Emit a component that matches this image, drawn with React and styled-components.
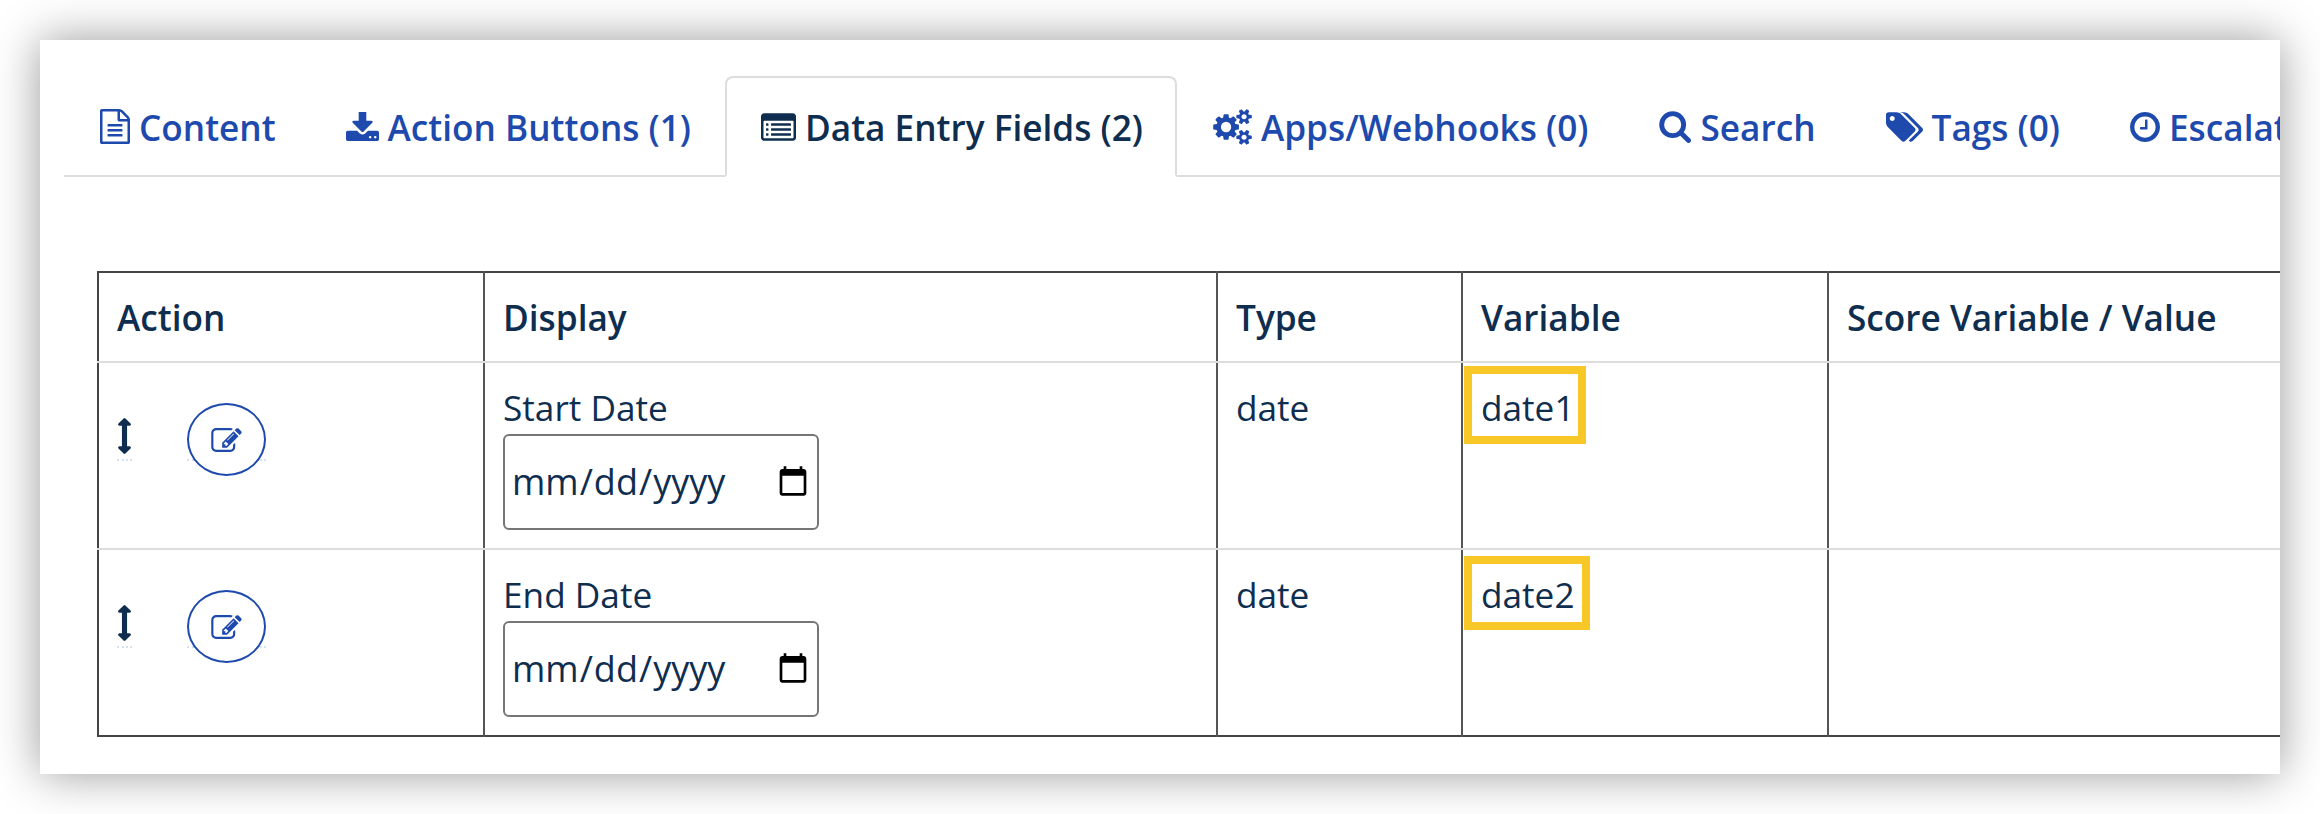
import React from 'react';
import styled, { createGlobalStyle } from 'styled-components';

const icons = {
  file: {
    box: '128 0 1536 1792',
    w: 30,
    h: 35,
    d: 'M1596 380q28 28 48 76t20 88v1152q0 40-28 68t-68 28h-1344q-40 0-68-28t-28-68v-1600q0-40 28-68t68-28h896q40 0 88 20t76 48zm-444-244v376h376q-10-29-22-41l-313-313q-12-12-41-22zm384 1528v-1024h-416q-40 0-68-28t-28-68v-416h-768v1536h1280zm-1024-864q0-14 9-23t23-9h704q14 0 23 9t9 23v64q0 14-9 23t-23 9h-704q-14 0-23-9t-9-23v-64zm736 224q14 0 23 9t9 23v64q0 14-9 23t-23 9h-704q-14 0-23-9t-9-23v-64q0-14 9-23t23-9h704zm0 256q14 0 23 9t9 23v64q0 14-9 23t-23 9h-704q-14 0-23-9t-9-23v-64q0-14 9-23t23-9h704z',
  },
  download: {
    box: '64 128 1664 1408',
    w: 33,
    h: 30,
    d: 'M1344 1344q0-26-19-45t-45-19-45 19-19 45 19 45 45 19 45-19 19-45zm256 0q0-26-19-45t-45-19-45 19-19 45 19 45 45 19 45-19 19-45zm128-224v320q0 40-28 68t-68 28h-1472q-40 0-68-28t-28-68v-320q0-40 28-68t68-28h465l135 136q58 56 136 56t136-56l136-136h464q40 0 68 28t28 68zm-325-569q17 41-14 70l-448 448q-18 19-45 19t-45-19l-448-448q-31-29-14-70 17-39 59-39h256v-448q0-26 19-45t45-19h256q26 0 45 19t19 45v448h256q42 0 59 39z',
  },
  list: {
    box: '0 128 1792 1408',
    w: 35,
    h: 28,
    d: 'M384 1184v64q0 13-9.5 22.5t-22.5 9.5h-64q-13 0-22.5-9.5t-9.5-22.5v-64q0-13 9.5-22.5t22.5-9.5h64q13 0 22.5 9.5t9.5 22.5zm0-256v64q0 13-9.5 22.5t-22.5 9.5h-64q-13 0-22.5-9.5t-9.5-22.5v-64q0-13 9.5-22.5t22.5-9.5h64q13 0 22.5 9.5t9.5 22.5zm0-256v64q0 13-9.5 22.5t-22.5 9.5h-64q-13 0-22.5-9.5t-9.5-22.5v-64q0-13 9.5-22.5t22.5-9.5h64q13 0 22.5 9.5t9.5 22.5zm1152 512v64q0 13-9.5 22.5t-22.5 9.5h-960q-13 0-22.5-9.5t-9.5-22.5v-64q0-13 9.5-22.5t22.5-9.5h960q13 0 22.5 9.5t9.5 22.5zm0-256v64q0 13-9.5 22.5t-22.5 9.5h-960q-13 0-22.5-9.5t-9.5-22.5v-64q0-13 9.5-22.5t22.5-9.5h960q13 0 22.5 9.5t9.5 22.5zm0-256v64q0 13-9.5 22.5t-22.5 9.5h-960q-13 0-22.5-9.5t-9.5-22.5v-64q0-13 9.5-22.5t22.5-9.5h960q13 0 22.5 9.5t9.5 22.5zm128 704v-832q0-13-9.5-22.5t-22.5-9.5h-1472q-13 0-22.5 9.5t-9.5 22.5v832q0 13 9.5 22.5t22.5 9.5h1472q13 0 22.5-9.5t9.5-22.5zm128-1088v1088q0 66-47 113t-113 47h-1472q-66 0-113-47t-47-113v-1088q0-66 47-113t113-47h1472q66 0 113 47t47 113z',
  },
  cogs: {
    box: '0 0 1920 1792',
    w: 39,
    h: 36,
    d: 'M896 896q0-106-75-181t-181-75-181 75-75 181 75 181 181 75 181-75 75-181zm768 512q0-52-38-90t-90-38-90 38-38 90q0 53 37.5 90.5t90.5 37.5 90.5-37.5 37.5-90.5zm0-1024q0-52-38-90t-90-38-90 38-38 90q0 53 37.5 90.5t90.5 37.5 90.5-37.5 37.5-90.5zm-384 421v185q0 10-7 19.5t-16 10.5l-155 24q-11 35-32 76 34 48 90 115 7 11 7 20 0 12-7 19-23 30-82.5 89.5t-78.5 59.5q-11 0-21-7l-115-90q-37 19-77 31-11 108-23 155-7 24-30 24h-186q-11 0-20-7.5t-10-17.5l-23-153q-34-10-75-31l-118 89q-7 7-20 7-11 0-21-8-144-133-144-160 0-9 7-19 10-14 41-53t47-61q-23-44-35-82l-152-24q-10-1-17-9.5t-7-19.5v-185q0-10 7-19.5t16-10.5l155-24q11-35 32-76-34-48-90-115-7-11-7-20 0-12 7-20 22-30 82-89t79-59q11 0 21 7l115 90q34-18 77-32 11-108 23-154 7-24 30-24h186q11 0 20 7.5t10 17.5l23 153q34 10 75 31l118-89q8-7 20-7 11 0 21 8 144 133 144 160 0 8-7 19-12 16-42 54t-45 60q23 48 34 82l152 23q10 2 17 10.5t7 19.5zm640 533v140q0 16-149 31-12 27-30 52 51 113 51 138 0 4-4 7-122 71-124 71-8 0-46-47t-52-68q-20 2-30 2t-30-2q-14 21-52 68t-46 47q-2 0-124-71-4-3-4-7 0-25 51-138-18-25-30-52-149-15-149-31v-140q0-16 149-31 13-29 30-52-51-113-51-138 0-4 4-7 4-2 35-20t59-34 30-16q8 0 46 46.5t52 67.5q20-2 30-2t30 2q51-71 92-112l6-2q4 0 124 70 4 3 4 7 0 25-51 138 17 23 30 52 149 15 149 31zm0-1024v140q0 16-149 31-12 27-30 52 51 113 51 138 0 4-4 7-122 71-124 71-8 0-46-47t-52-68q-20 2-30 2t-30-2q-14 21-52 68t-46 47q-2 0-124-71-4-3-4-7 0-25 51-138-18-25-30-52-149-15-149-31v-140q0-16 149-31 13-29 30-52-51-113-51-138 0-4 4-7 4-2 35-20t59-34 30-16q8 0 46 46.5t52 67.5q20-2 30-2t30 2q51-71 92-112l6-2q4 0 124 70 4 3 4 7 0 25-51 138 17 23 30 52 149 15 149 31z',
  },
  search: {
    box: '0 64 1728 1728',
    w: 33,
    h: 33,
    d: 'M1216 832q0-185-131.5-316.5t-316.5-131.5-316.5 131.5-131.5 316.5 131.5 316.5 316.5 131.5 316.5-131.5 131.5-316.5zm512 832q0 52-38 90t-90 38q-54 0-90-38l-343-342q-179 124-399 124-143 0-273.5-55.5t-225-150-150-225-55.5-273.5 55.5-273.5 150-225 225-150 273.5-55.5 273.5 55.5 225 150 150 225 55.5 273.5q0 220-124 399l343 343q37 37 37 90z',
  },
  tags: {
    box: '0 128 1899 1515',
    w: 37,
    h: 30,
    d: 'M448 448q0-53-37.5-90.5t-90.5-37.5-90.5 37.5-37.5 90.5 37.5 90.5 90.5 37.5 90.5-37.5 37.5-90.5zm1067 576q0 53-37 90l-491 492q-39 37-91 37-53 0-90-37l-715-716q-38-37-64.5-101t-26.5-117v-416q0-52 38-90t90-38h416q53 0 117 26.5t102 64.5l715 714q37 39 37 91zm384 0q0 53-37 90l-491 492q-39 37-91 37-36 0-59-14t-53-45l470-470q37-37 37-90 0-52-37-91l-715-714q-38-38-102-64.5t-117-26.5h224q53 0 117 26.5t102 64.5l715 714q37 39 37 91z',
  },
  clock: {
    box: '128 128 1536 1536',
    w: 30,
    h: 30,
    d: 'M1024 544v448q0 14-9 23t-23 9h-320q-14 0-23-9t-9-23v-64q0-14 9-23t23-9h224v-352q0-14 9-23t23-9h64q14 0 23 9t9 23zm416 352q0-148-73-273t-198-198-273-73-273 73-198 198-73 273 73 273 198 198 273 73 273-73 198-198 73-273zm224 0q0 209-103 385.5t-279.5 279.5-385.5 103-385.5-103-279.5-279.5-103-385.5 103-385.5 279.5-279.5 385.5-103 385.5 103 279.5 279.5 103 385.5z',
  },
  edit: {
    box: '0 128 1792 1408',
    w: 31,
    h: 24,
    d: 'M888 1184l116-116-152-152-116 116v56h96v96h56zm440-720q-16-16-33 1l-350 350q-17 17-1 33t33-1l350-350q17-17 1-33zm80 594v190q0 119-84.5 203.5t-203.5 84.5h-832q-119 0-203.5-84.5t-84.5-203.5v-832q0-119 84.5-203.5t203.5-84.5h832q63 0 117 25 15 7 18 23 3 17-9 29l-49 49q-14 14-32 8-23-6-45-6h-832q-66 0-113 47t-47 113v832q0 66 47 113t113 47h832q66 0 113-47t47-113v-126q0-13 9-22l64-64q15-15 35-7t20 29zm-96-738l288 288-672 672h-288v-288zm444 132l-92 92-288-288 92-92q28-28 68-28t68 28l152 152q28 28 28 68t-28 68z',
  },
  move: {
    box: '384 0 640 1792',
    w: 13,
    h: 36,
    d: 'M1024 320q0 26-19 45t-45 19h-128v1024h128q26 0 45 19t19 45-19 45l-256 256q-19 19-45 19t-45-19l-256-256q-19-19-19-45t19-45 45-19h128v-1024h-128q-26 0-45-19t-19-45 19-45l256-256q19-19 45-19t45 19l256 256q19 19 19 45z',
  },
};

const tabs = [
  { label: 'Content', icon: 'file' },
  { label: 'Action Buttons (1)', icon: 'download' },
  { label: 'Data Entry Fields (2)', icon: 'list', active: true },
  { label: 'Apps/Webhooks (0)', icon: 'cogs' },
  { label: 'Search', icon: 'search' },
  { label: 'Tags (0)', icon: 'tags' },
  { label: 'Escalations (0)', icon: 'clock' },
];

const rows = [
  { display: 'Start Date', type: 'date', variable: 'date1', box: { top: 3, w: 122, h: 78 } },
  { display: 'End Date', type: 'date', variable: 'date2', box: { top: 6, w: 126, h: 74 } },
];

const Icon = ({ name }) => {
  const { box, w, h, d } = icons[name];
  return (
    <svg viewBox={box} width={w} height={h} fill="currentColor" aria-hidden="true">
      <path d={d} />
    </svg>
  );
};

const App = () => {
  return (
    <>
      <GlobalStyle />
      <Page>
        <Card>
          <TabBar>
            {tabs.map((tab) => (
              <Tab key={tab.label} $active={tab.active}>
                <Icon name={tab.icon} />
                {tab.label}
              </Tab>
            ))}
          </TabBar>
          <Table>
            <colgroup>
              <col width="386" />
              <col width="733" />
              <col width="245" />
              <col width="366" />
              <col width="600" />
            </colgroup>
            <thead>
              <tr>
                <HeadCell>Action</HeadCell>
                <HeadCell>Display</HeadCell>
                <HeadCell>Type</HeadCell>
                <HeadCell>Variable</HeadCell>
                <HeadCell>Score Variable / Value</HeadCell>
              </tr>
            </thead>
            <tbody>
              {rows.map((row) => (
                <tr key={row.variable}>
                  <Cell>
                    <Actions>
                      <ActionLink>
                        <MoveHandle>
                          <Icon name="move" />
                        </MoveHandle>
                      </ActionLink>
                      <ActionLink>
                        <EditButton>
                          <Icon name="edit" />
                        </EditButton>
                      </ActionLink>
                    </Actions>
                  </Cell>
                  <Cell>
                    {row.display}
                    <DateInput type="date" />
                  </Cell>
                  <Cell>{row.type}</Cell>
                  <VariableCell>
                    {row.variable}
                    <Highlight $top={row.box.top} $w={row.box.w} $h={row.box.h} />
                  </VariableCell>
                  <Cell />
                </tr>
              ))}
            </tbody>
          </Table>
        </Card>
      </Page>
    </>
  );
};

export default App;

const GlobalStyle = createGlobalStyle`
  html, body {
    margin: 0;
    background: #fff;
  }
  body {
    font-family: 'Open Sans', 'Noto Sans', sans-serif;
    color: #0f2e4f;
  }
`;
const Page = styled.div`
  width: 2320px;
  height: 814px;
  padding: 40px;
  box-sizing: border-box;
  overflow: hidden;
`;
const Card = styled.div`
  width: 2240px;
  height: 734px;
  box-sizing: border-box;
  padding: 36px 0 0 24px;
  background: #fff;
  box-shadow: 0 0 44px rgba(0, 0, 0, 0.4);
  overflow: hidden;
`;
const TabBar = styled.div`
  display: flex;
  border-bottom: 2px solid #ddd;
  white-space: nowrap;
  margin-bottom: 94px;
`;
const Tab = styled.a`
  display: flex;
  align-items: center;
  gap: 9px;
  flex: none;
  height: 101px;
  box-sizing: border-box;
  padding: 0 32px;
  margin-bottom: -2px;
  border: 2px solid ${(p) => (p.$active ? '#ddd' : 'transparent')};
  border-bottom-color: ${(p) => (p.$active ? '#fff' : 'transparent')};
  border-radius: 8px 8px 0 0;
  font-size: 35.2px;
  font-weight: 600;
  color: ${(p) => (p.$active ? '#0f2e4f' : '#1e4aad')};

  svg {
    flex: none;
    margin-left: 2px;
  }
`;
const Table = styled.table`
  margin-left: 33px;
  width: 2330px;
  table-layout: fixed;
  border-collapse: collapse;
  border-top: 2px solid #444;
  border-bottom: 2px solid #444;
  border-left: 2px solid #444;
  font-size: 35.2px;
`;
const HeadCell = styled.th`
  height: 90px;
  padding: 0 18px;
  box-sizing: border-box;
  text-align: left;
  font-weight: 600;
  border-right: 2px solid #555;
  border-bottom: 2px solid #ddd;
`;
const Cell = styled.td`
  height: 187px;
  padding: 18px;
  box-sizing: border-box;
  vertical-align: top;
  line-height: 52.8px;
  border-right: 2px solid #555;
  border-bottom: 2px solid #ddd;

  tr:last-child & {
    border-bottom: 0;
  }
`;
const VariableCell = styled(Cell)`
  position: relative;
`;
const Highlight = styled.span`
  position: absolute;
  left: 1px;
  top: ${(p) => p.$top}px;
  width: ${(p) => p.$w}px;
  height: ${(p) => p.$h}px;
  box-sizing: border-box;
  border: 8px solid #f8c728;
`;
const Actions = styled.div`
  display: flex;
  align-items: flex-start;
  gap: 55px;
  padding-top: 22px;
`;
const ActionLink = styled.a`
  position: relative;
  display: block;

  &::after {
    content: '';
    position: absolute;
    left: 0;
    right: 0;
    top: 56px;
    border-bottom: 2px dotted #d4e2f1;
  }
`;
const MoveHandle = styled.span`
  display: flex;
  justify-content: center;
  width: 15px;
  padding-top: 15px;
  line-height: 0;
`;
const EditButton = styled.span`
  position: relative;
  z-index: 1;
  display: flex;
  align-items: center;
  justify-content: center;
  width: 79px;
  height: 73px;
  box-sizing: border-box;
  border: 2px solid #1e4aad;
  border-radius: 50%;
  background: #fff;
  color: #1e4aad;
`;
const DateInput = styled.input`
  display: block;
  width: 316px;
  height: 96px;
  box-sizing: border-box;
  padding: 0 7px 0 6px;
  border: 2px solid #767676;
  border-radius: 6px;
  background: #fff;
  font-family: inherit;
  font-size: 36px;
  color: inherit;
  &::-webkit-calendar-picker-indicator {
    width: 34px;
    height: 34px;
    padding: 0;
    margin: 0;
  }
`;
